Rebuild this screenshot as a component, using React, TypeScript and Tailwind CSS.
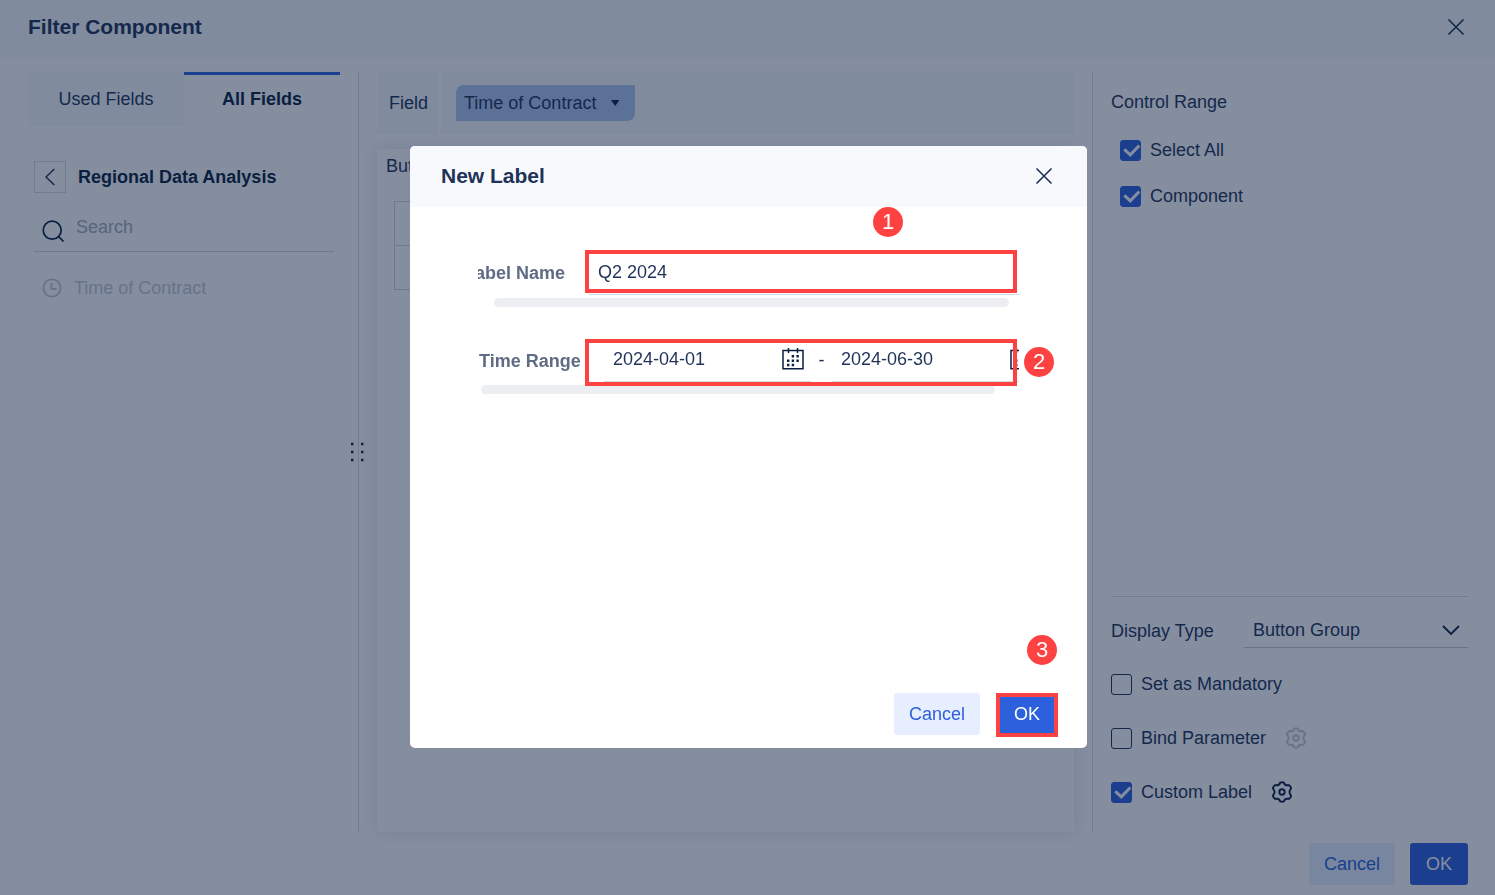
import { useState } from "react";
import type { ReactNode } from "react";

const GearIcon = ({ className = "" }: { className?: string }) => (
    <svg viewBox="0 0 22 22" className={`size-[22px] ${className}`} fill="none" stroke="currentColor" strokeWidth="1.9" strokeLinejoin="round">
        <path d="M9.2 1.6Q11 .8 12.8 1.6Q13.8 4.6 16.4 4.3L18.2 4.2Q19.7 5.3 20.1 7.2L19.2 8.8Q17.8 11 19.2 13.2L20.1 14.8Q19.7 16.7 18.2 17.8L16.4 17.7Q13.8 17.4 12.8 20.4Q11 21.2 9.2 20.4Q8.2 17.4 5.6 17.7L3.8 17.8Q2.3 16.7 1.9 14.8L2.8 13.2Q4.2 11 2.8 8.8L1.9 7.2Q2.3 5.3 3.8 4.2L5.6 4.3Q8.2 4.6 9.2 1.6Z" />
        <circle cx="11" cy="11" r="2.7" />
    </svg>
);

const CloseIcon = () => (
    <svg viewBox="0 0 18 18" className="size-[18px]" fill="none" stroke="currentColor" strokeWidth="1.6">
        <path d="M1.5 1.5l15 15M16.5 1.5l-15 15" />
    </svg>
);

const CalendarIcon = () => (
    <svg viewBox="0 0 22 22" className="size-[22px]" fill="none" stroke="currentColor" strokeWidth="1.5">
        <path d="M1 2.5h20v18.2H1zM6.5 0v5M15.5 0v5" />
        <path d="M9.7 8.2h2.4M14.4 8.2h2.4M5 12.7h2.4M9.7 12.7h2.4M14.4 12.7h2.4M5 17h2.4M9.7 17h2.4" strokeWidth="2.4" />
    </svg>
);

const Check = ({ label, checked = false, children }: { label: string; checked?: boolean; children?: ReactNode }) => {
    const [on, setOn] = useState(checked);
    return (
        <div className="flex items-center">
            <label className="flex items-center gap-[9px]">
                <span className="grid size-[21px]">
                    <input
                        type="checkbox"
                        checked={on}
                        onChange={() => setOn(!on)}
                        className="col-start-1 row-start-1 size-[21px] appearance-none rounded-[3px] border border-[#1f3358] checked:border-[#2c60dc] checked:bg-[#2c60dc]"
                    />
                    {on && (
                        <svg viewBox="0 0 21 21" className="pointer-events-none col-start-1 row-start-1 size-[21px]" fill="none" stroke="#fff" strokeWidth="3">
                            <path d="M4.3 9.3l6 5.6 9-9.4" />
                        </svg>
                    )}
                </span>
                {label}
            </label>
            {children}
        </div>
    );
};

// numbered step marker
const Step = ({ n, className }: { n: number; className: string }) => (
    <span className={`absolute flex size-[30px] items-center justify-center rounded-full bg-[#fe4242] text-[22px] leading-none text-white ${className}`}>
        {n}
    </span>
);

const DateField = ({ label, value }: { label: string; value: string }) => (
    <div className="flex w-[207px] shrink-0 items-center border-b border-[#d5d9e0] pr-[7px] pl-[9px]">
        <input aria-label={label} defaultValue={value} className="w-full min-w-0 bg-transparent outline-none" />
        <button aria-label={`Pick ${label}`} className="shrink-0 text-[#0a1e40]">
            <CalendarIcon />
        </button>
    </div>
);

const FieldsPanel = () => (
    <aside className="relative w-[331px] shrink-0 border-r border-[#d2dce7]">
        <div className="flex w-[312px]">
            <button className="h-[54px] flex-1 bg-[#f6f8fc]">Used Fields</button>
            <button className="h-[54px] flex-1 border-t-3 border-[#2c60dc] pb-[3px] font-bold text-[#0a1e40]">All Fields</button>
        </div>
        <div className="mt-[35px] flex items-center gap-3 pl-1.5">
            <button aria-label="Back" className="flex size-8 items-center justify-center border border-[#d2dce7]">
                <svg viewBox="0 0 10 18" className="h-[18px] w-2.5" fill="none" stroke="currentColor" strokeWidth="1.5">
                    <path d="M9.3 1L1 9l8.3 8" />
                </svg>
            </button>
            <h2 className="font-bold text-[#0a1e40]">Regional Data Analysis</h2>
        </div>
        <label className="mt-[9px] mr-6 ml-1.5 flex h-[50px] items-start gap-3 border-b border-[#d0d5de] pl-2">
            <svg viewBox="0 0 22 22" className="mt-[18px] size-[22px] shrink-0" fill="none" stroke="#0a1e40" strokeWidth="1.7">
                <circle cx="10.2" cy="10.2" r="9" />
                <path d="M16.5 16.5l5 5" />
            </svg>
            <input placeholder="Search" aria-label="Search" className="mt-[13px] w-full min-w-0 bg-transparent outline-none placeholder:text-[#a3abb9]" />
        </label>
        <div className="mt-6 flex items-center gap-3 pl-3.5 text-[#c3c9d4]">
            <svg viewBox="0 0 20 20" className="size-5" fill="none" stroke="currentColor" strokeWidth="1.9">
                <circle cx="10" cy="10" r="8.6" />
                <path d="M9.5 5v6h5" />
            </svg>
            Time of Contract
        </div>
        {/* drag handle */}
        <svg viewBox="0 0 14 20" className="absolute top-1/2 -right-1.5 h-5 w-3.5 -translate-y-1/2" fill="#0a1e40">
            <path d="M1 .8h2.4v2.4H1zM11 .8h2.4v2.4H11zM1 8.8h2.4v2.4H1zM11 8.8h2.4v2.4H11zM1 16.8h2.4v2.4H1zM11 16.8h2.4v2.4H11z" />
        </svg>
    </aside>
);

const Preview = () => (
    <section className="flex min-w-0 flex-1 flex-col gap-[15px] px-[18px]">
        <div className="flex h-[62px] bg-[#f6f8fc]">
            <div className="flex items-center border-r-3 border-white pr-2.5 pl-3">Field</div>
            <div className="flex items-center pl-[15px]">
                <button className="flex h-9 w-[179px] items-center gap-3.5 rounded-tl-lg rounded-br-lg bg-[#adc5f0] pl-2">
                    Time of Contract
                    <svg viewBox="0 0 10 6" className="h-1.5 w-2.5" fill="#0a1e40">
                        <path d="M1 0h8.4L5.2 6z" />
                    </svg>
                </button>
            </div>
        </div>
        <div className="flex-1 shadow-[0_0_18px_rgba(10,30,64,0.12)]">
            <p className="pt-[5px] pl-[9px]">Button Group</p>
            <div className="mx-[17px] mt-[23px] h-[45px] border border-[#d0d8e4]" />
            <div className="mx-[17px] h-11 border border-t-0 border-[#d0d8e4]" />
        </div>
    </section>
);

const Settings = () => (
    <aside className="flex w-[376px] shrink-0 flex-col border-l border-[#d2dce7] pl-[18px]">
        <h2 className="mt-[18px]">Control Range</h2>
        <div className="mt-6 flex flex-col gap-[22px] pl-[9px]">
            <Check label="Select All" checked />
            <Check label="Component" checked />
        </div>
        <div className="mt-auto flex flex-col gap-[30px] border-t border-[#d2dce7] pt-4 pb-7">
            <label className="-mb-1.5 flex items-center justify-between">
                Display Type
                <span className="grid w-[224px] items-center border-b border-[#c5ccd7]">
                    <select className="col-start-1 row-start-1 h-[34px] appearance-none bg-transparent pl-[9px] outline-none">
                        <option>Button Group</option>
                    </select>
                    <svg viewBox="0 0 18 10" className="pointer-events-none col-start-1 row-start-1 mr-2 h-2.5 w-[18px] justify-self-end" fill="none" stroke="#0a1e40" strokeWidth="1.8">
                        <path d="M1 1l8 8 8-8" />
                    </svg>
                </span>
            </label>
            <Check label="Set as Mandatory" />
            <Check label="Bind Parameter">
                <GearIcon className="ml-[19px] text-[#c3c9d4]" />
            </Check>
            <Check label="Custom Label" checked>
                <GearIcon className="ml-[19px] text-[#0a1e40]" />
            </Check>
        </div>
    </aside>
);

const NewLabelDialog = () => (
    <div role="dialog" aria-label="New Label" className="relative flex h-[602px] w-[677px] flex-col overflow-hidden rounded-[5px] bg-white">
        <header className="flex h-[61px] items-center justify-between bg-[#f8f9fd] pr-[34px] pl-[31px]">
            <h2 className="text-[21px] font-bold">New Label</h2>
            <button aria-label="Close dialog">
                <CloseIcon />
            </button>
        </header>
        <div className="flex-1 px-[68px] pt-11">
            <div className="relative">
                <div className="flex h-11">
                    <label htmlFor="label-name" className="flex w-[111px] items-center justify-end overflow-hidden pr-6 font-bold whitespace-nowrap text-[#5f6c84]">
                        Label Name
                    </label>
                    <input id="label-name" defaultValue="Q2 2024" className="min-w-0 flex-1 border-b border-[#d5d9e0] px-[9px] outline-none" />
                </div>
                <div className="mt-[3px] mr-2.5 ml-4 h-[9px] rounded-full bg-[#edeef2]" />
                <div className="pointer-events-none absolute -top-px right-0.5 left-[107px] h-[43px] border-4 border-[#fe4242]" />
            </div>
            <div className="relative mt-[31px]">
                <div className="flex h-11 overflow-hidden">
                    <span className="flex w-[126px] shrink-0 items-center pt-0.5 pl-px font-bold text-[#5f6c84]">Time Range</span>
                    <DateField label="start date" value="2024-04-01" />
                    <span className="flex w-[21px] shrink-0 items-center justify-center">-</span>
                    <DateField label="end date" value="2024-06-30" />
                </div>
                <div className="mt-[3px] mr-6 ml-[3px] h-[9px] rounded-full bg-[#edeef2]" />
                <div className="pointer-events-none absolute top-px right-0.5 left-[107px] h-[47px] border-4 border-[#fe4242]" />
            </div>
        </div>
        <footer className="flex items-start justify-end gap-4 pr-[29px] pb-[11px]">
            <button className="h-[42px] w-[86px] rounded-[3px] bg-[#e6eeff] text-[#2c60dc]">Cancel</button>
            <button className="h-11 w-[62px] border-4 border-[#fe4242] bg-[#2c60dc] pb-0.5 text-white">OK</button>
        </footer>
        <Step n={1} className="top-[61px] left-[463px]" />
        <Step n={2} className="top-[201px] left-[614px]" />
        <Step n={3} className="top-[489px] left-[617px]" />
    </div>
);

export default function App() {
    return (
        <div className="flex min-h-screen flex-col bg-white font-['Liberation_Sans',Arial,sans-serif] text-lg/6 text-[#1f3358]">
            <header className="flex h-[57px] items-center justify-between bg-[#f6f8fc] pr-[30px] pb-[3px] pl-7">
                <h1 className="text-[21px] font-bold">Filter Component</h1>
                <button aria-label="Close">
                    <CloseIcon />
                </button>
            </header>
            <main className="flex flex-1 pt-[15px] pr-[27px] pl-7">
                <FieldsPanel />
                <Preview />
                <Settings />
            </main>
            <footer className="flex justify-end gap-[15px] pt-[11px] pr-[27px] pb-2.5">
                <button className="h-[42px] w-[86px] rounded-[3px] bg-[#e6eeff] text-[#2c60dc]">Cancel</button>
                <button className="h-[42px] w-[58px] rounded-[3px] bg-[#2c60dc] text-white">OK</button>
            </footer>
            {/* modal */}
            <div className="fixed inset-0 z-10 flex items-center justify-center bg-[#0a1e40]/50 pb-0.5 pl-0.5">
                <NewLabelDialog />
            </div>
        </div>
    );
}
